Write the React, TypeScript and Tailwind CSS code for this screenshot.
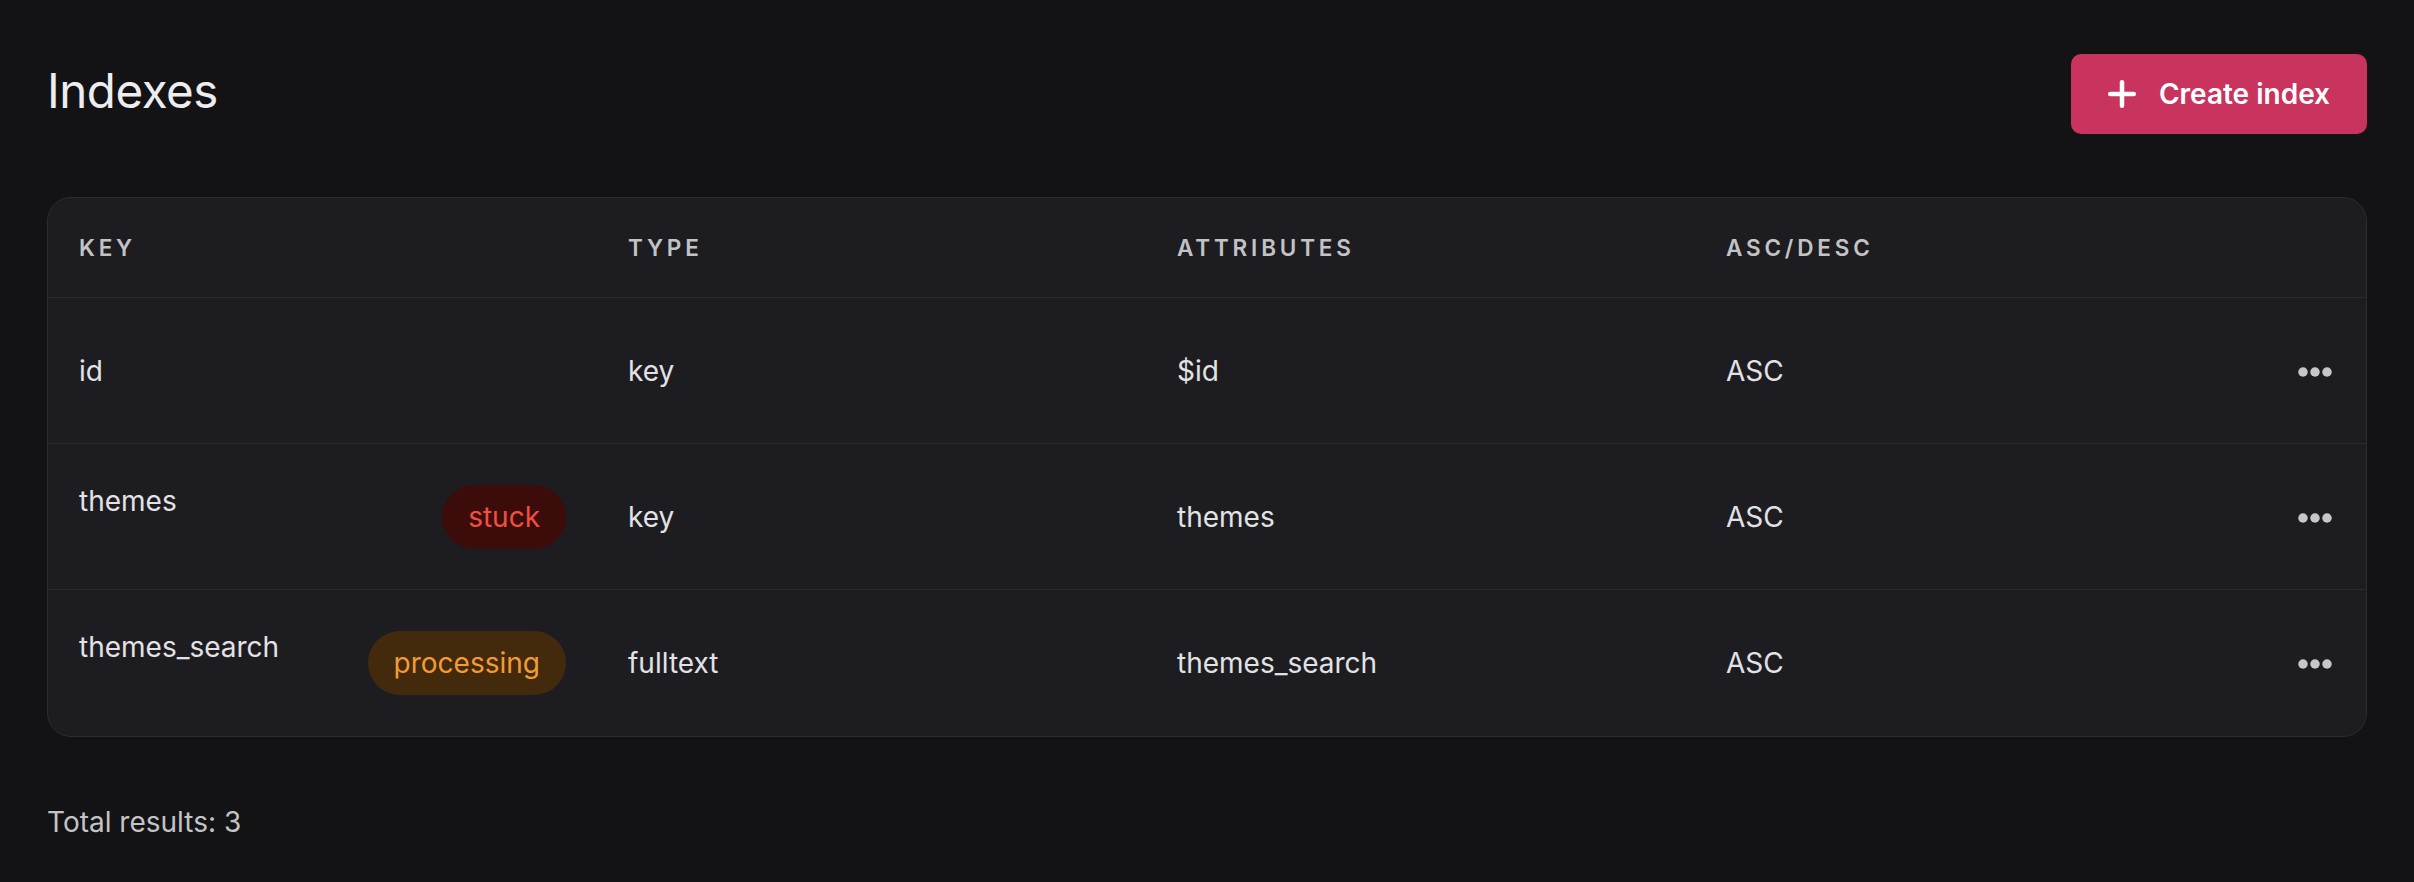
const indexes = [
  { key: 'id', status: null, type: 'key', attributes: '$id', order: 'ASC' },
  { key: 'themes', status: 'stuck', type: 'key', attributes: 'themes', order: 'ASC' },
  { key: 'themes_search', status: 'processing', type: 'fulltext', attributes: 'themes_search', order: 'ASC' },
];

function StatusBadge({ status }: { status: string }) {
  const styles =
    status === 'stuck' ? 'bg-[#3c0c0b] text-[#f0503f]' : 'bg-[#432a0c] text-[#f29b34]';
  return (
    <span
      className={`inline-flex h-[64px] shrink-0 items-center rounded-full px-[26px] text-[28px] ${styles}`}
    >
      {status}
    </span>
  );
}

function Dots() {
  return (
    <svg width="34" height="10" viewBox="0 0 34 10" fill="#c7c7ca">
      <circle cx="5" cy="5" r="4.75" />
      <circle cx="17" cy="5" r="4.75" />
      <circle cx="29" cy="5" r="4.75" />
    </svg>
  );
}

export default function App() {
  const cols = 'grid grid-cols-[549px_549px_549px_549px_1fr]';

  return (
    <div className="min-h-screen bg-[#131316] px-[47px] pt-[54px] font-['Inter',sans-serif]">
      <div className="flex h-[80px] items-center justify-between">
        <h1 className="pb-[6px] text-[47.5px] font-normal tracking-[-0.01em] text-[#ededf0]">Indexes</h1>
        <button className="flex h-[80px] w-[296px] items-center justify-center gap-[23px] rounded-[10px] bg-[#c9345e] text-[28px] font-semibold text-white">
          <svg width="28" height="28" viewBox="0 0 28 28" stroke="white" strokeWidth="4.5" strokeLinecap="round">
            <line x1="14" y1="2.25" x2="14" y2="25.75" />
            <line x1="2.25" y1="14" x2="25.75" y2="14" />
          </svg>
          Create index
        </button>
      </div>

      <div className="mt-[63px] overflow-hidden rounded-[24px] border border-[#2c2c30] bg-[#1d1d21]">
        <div className={`${cols} h-[100px] items-center border-b border-[#2c2c30]`}>
          {['Key', 'Type', 'Attributes', 'Asc/Desc'].map((h) => (
            <div
              key={h}
              className="px-[31px] text-[22.5px] font-semibold uppercase tracking-[0.17em] text-[#c3c3c6]"
            >
              {h}
            </div>
          ))}
          <div />
        </div>

        {indexes.map((row, i) => (
          <div
            key={row.key}
            className={`${cols} h-[146px] items-center text-[28px] text-[#e2e2e5] ${
              i < indexes.length - 1 ? 'border-b border-[#2c2c30]' : ''
            }`}
          >
            <div className="flex items-start justify-between gap-4 px-[31px]">
              <span className="leading-[32px]">{row.key}</span>
              {row.status && <StatusBadge status={row.status} />}
            </div>
            <div className="px-[31px]">{row.type}</div>
            <div className="px-[31px]">{row.attributes}</div>
            <div className="px-[31px]">{row.order}</div>
            <div className="flex justify-end pr-[34px] pt-[2px]">
              <Dots />
            </div>
          </div>
        ))}
      </div>

      <p className="mt-[64px] text-[28px] text-[#c3c3c6]">Total results: 3</p>
    </div>
  );
}
